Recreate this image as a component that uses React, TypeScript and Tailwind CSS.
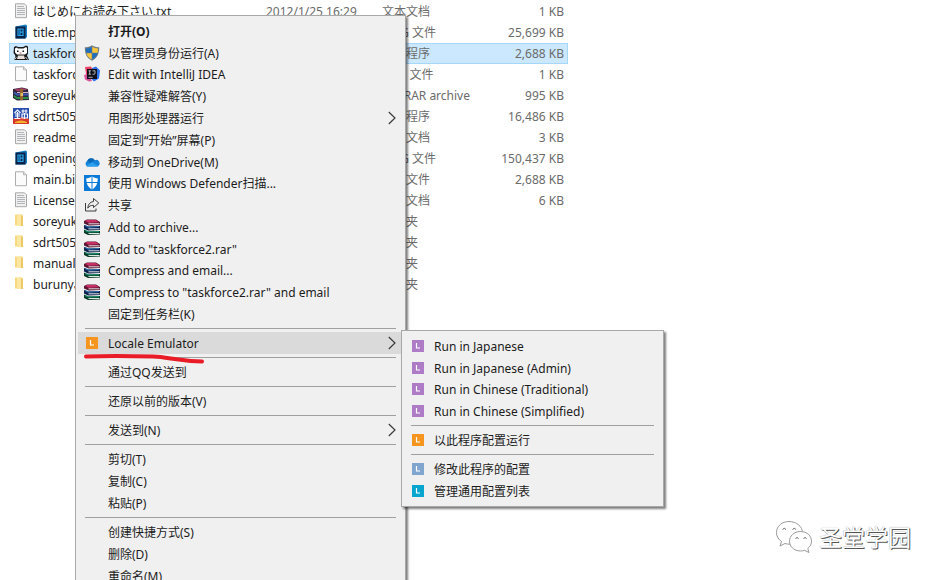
import type { ReactNode } from "react";

function TextFileIcon() {
  return (
    <svg className="block" width="16" height="16" viewBox="0 0 16 16" aria-hidden="true">
      <path d="M2.500 .8h9l2 2v11.900h-11z" fill="#f0f0f0" stroke="#a8a8a8" />
      <path d="M4 3.500h7M4 5.500h8M4 7.500h8M4 9.500h8M4 11.500h8" stroke="#b3b6b8" />
    </svg>
  );
}

function BlankFileIcon() {
  return (
    <svg className="block" width="16" height="16" viewBox="0 0 16 16" aria-hidden="true">
      <path d="M2.500 .8h8l3 3v10.900h-11z" fill="#fbfbfb" stroke="#adadad" />
      <path d="M10.500 .8v3h3" fill="none" stroke="#b5b5b5" />
    </svg>
  );
}

function VideoIcon() {
  return (
    <svg className="block" width="16" height="16" viewBox="0 0 16 16" aria-hidden="true">
      <path d="M2.500 2.500 12.500.500l1.500 1v11.500l-1.500 1.500h-10z" fill="#1b7fc6" />
      <path d="M2.500 2.500h10v12h-10z" fill="#0a2347" />
      <path d="M5 5h5v6.500H5zM7 5v6.500M7 8.200h3" fill="none" stroke="#2aa6ec" strokeWidth="1.200" />
    </svg>
  );
}

function CatIcon() {
  return (
    <svg className="block" width="16" height="16" viewBox="0 0 16 16" aria-hidden="true">
      <path d="M1 2 3 1l2 1h5l3-1.500 2 1v7l-1 2 2 4.500H1l1.500-3L2 10 .5 8z" fill="#1b1b1b" />
      <path d="M2 3.500 3.500 2.500 5 3.500h5.500L13 2l1 1v5l-2 1.500H4L2 7.500z" fill="#fff" />
      <path d="M5 10.500h6l1 3.500H4z" fill="#e9dfda" />
      <path d="M4 5.500h1.500V7H4zM9.500 5.500H11V7H9.500z" fill="#111" />
      <path d="M6.500 7.500h2v1h-2z" fill="#c96868" />
      <path d="M1.500 14.500l2-2M14.500 14.500l-2-2.500" stroke="#cfcfcf" />
    </svg>
  );
}

function WinRarIcon() {
  return (
    <svg className="block" width="16" height="16" viewBox="0 0 16 16" aria-hidden="true">
      <path d="M0 2 3 .500h9l4 2.500v3L4.500 6.500 0 4.500z" fill="#5d1735" />
      <path d="M1 1.800 3.200 1h8.500L15 3.200 4.500 3.800z" fill="#c92f64" />
      <path d="M4.500 4.800h11" stroke="#ecdfe1" />
      <path d="M0 6l4 1.500 12-.5v4l-12 .5-4-2z" fill="#10204c" />
      <path d="M1 6.500l3.500 1.700L15 7.500" fill="none" stroke="#2a6fae" strokeWidth="1.200" />
      <path d="M4.500 9.800h11" stroke="#dfe5ee" />
      <path d="M0 10.500l4 2 12-.5v3.500L4 16l-4-2z" fill="#0c3a28" />
      <path d="M1 11.500l3.500 1.500 10.500-.4" fill="none" stroke="#16906a" strokeWidth="1.200" />
      <path d="M4.500 14.500h11" stroke="#dbe8e0" />
    </svg>
  );
}

function RarFileIcon() {
  return (
    <svg className="block" width="16" height="14" viewBox="0 0 16 14" aria-hidden="true">
      <path d="M0 2l9-1.500L15 2l1 11-12 .500L0 11z" fill="#30273a" />
      <path d="M1 2.500 9 1l6 1.500-10 2z" fill="#a13a68" />
      <path d="M4 5.500h11.500" stroke="#d8b6c6" />
      <path d="M1 5.500l3 2h11.500" fill="none" stroke="#3c5cb8" strokeWidth="2" />
      <path d="M1 9l3 2h11.500" fill="none" stroke="#269047" strokeWidth="2" />
      <path d="M7 2h3v11H7z" fill="#93652d" />
      <path d="M7.500 6h2.500v3H7.500z" fill="#e0bd63" />
    </svg>
  );
}

function GameIcon() {
  return (
    <svg className="block" width="16" height="16" viewBox="0 0 16 16" aria-hidden="true">
      <path d="M0 0h16v16H0z" fill="#2a4eae" />
      <path d="M0 11c5-2 11-2 16 0v5H0z" fill="#d9392b" />
      <path d="M2 14c4-2 8-2 12 0v1H2z" fill="#f0b62e" />
      <path d="M1.500 5 4.500 2l3 3M2 6h5M4.500 4v6M2 8h5M1.500 10.500h6M8.500 3h6M10 1.500V5M13 1.500V5M9 6h5.500v4H9zM11.500 5v6" fill="none" stroke="#f7f9ff" strokeWidth="1.200" />
    </svg>
  );
}

function FolderIcon() {
  return (
    <svg className="block" width="16" height="16" viewBox="0 0 16 16" aria-hidden="true">
      <path d="M2 1.500h7v11H2z" fill="#f7d984" />
      <path d="M4 1.500h5.500v9.500l1 2H4z" fill="#fbe6a2" />
      <path d="M8 2.500h2v10.500H8z" fill="#eec766" />
    </svg>
  );
}

function ShieldIcon() {
  return (
    <svg className="block" width="16" height="16" viewBox="0 0 16 16" aria-hidden="true">
      <path d="M8 .3C6 1.800 3.500 2.300.800 2.300c0 6 1.500 10.500 7.200 13.500 5.700-3 7.200-7.500 7.200-13.500C12.500 2.300 10 1.800 8 .3z" fill="#6d7a83" />
      <path d="M7.700 1.800C6 2.900 4 3.300 2 3.400c0 1.600.1 3 .4 4.300h5.300z" fill="#1f6fbd" />
      <path d="M8.300 1.800C10 2.900 12 3.300 14 3.400c0 1.600-.1 3-.4 4.300H8.300z" fill="#f8c63c" />
      <path d="M2.500 8.200h5.200v6.200C4.700 12.800 3.200 11 2.500 8.200z" fill="#f8c63c" />
      <path d="M13.500 8.200H8.300v6.200c3-1.600 4.500-3.400 5.200-6.200z" fill="#1f6fbd" />
    </svg>
  );
}

function IdeaIcon() {
  return (
    <svg className="block" width="16" height="16" viewBox="0 0 16 16" aria-hidden="true">
      <path d="M1 1l6-.5 3 6-5 8-4-2 1-5z" fill="#ee3f66" />
      <path d="M8 2l4-1.500 4 4-1 8-5 3-3-3z" fill="#2f72ee" />
      <path d="M0 9l4-1 4 7-3 .5-4-2z" fill="#d9559c" />
      <path d="M3 3h10v10H3z" fill="#11101a" />
      <path d="M4.500 4.800h2.500M5.700 4.800v3.400M4.500 8.200h2.500M8.500 4.800h2.500v2.500q0 1-1.200 1H8.500M4.500 11.300h4" fill="none" stroke="#d8d8dc" strokeWidth=".8" />
    </svg>
  );
}

function CloudIcon() {
  return (
    <svg className="block" width="16" height="16" viewBox="0 0 16 16" aria-hidden="true">
      <path d="M3.500 12.500A3 3 0 0 1 3.200 7a4.200 4.200 0 0 1 7.600-.8 3.300 3.300 0 0 1 2.700 6.300z" fill="#1683d8" />
      <path d="M3.200 7a4.200 4.200 0 0 1 7.600-.8L6 9z" fill="#0d68b5" />
      <path d="M2 12l6-3.800 6.500 3.800q-.5.500-1.300.5H3.500z" fill="#2ba0ee" />
    </svg>
  );
}

function DefenderIcon() {
  return (
    <svg className="block" width="16" height="16" viewBox="0 0 16 16" aria-hidden="true">
      <path d="M0 0h16v16H0z" fill="#0b79d5" />
      <path d="M8 1.500C6.200 2.800 4.200 3.200 2.300 3.300c0 5 1 8.500 5.700 11.200 4.700-2.700 5.700-6.200 5.700-11.200C11.800 3.200 9.800 2.800 8 1.500z" fill="#fff" />
      <path d="M8 1.500v13M2 7.500h12" stroke="#0b79d5" />
    </svg>
  );
}

function ShareIcon() {
  return (
    <svg className="block" width="16" height="16" viewBox="0 0 16 16" aria-hidden="true">
      <path d="M1.500 6v8h10.500V11.500" fill="none" stroke="#3c3c3c" />
      <path d="M9.500 1.500 14.800 6 9.500 10.500V8.300C6.800 8.300 5 9 3.800 11.200c.2-3.700 2-6.200 5.700-6.700z" fill="none" stroke="#3c3c3c" strokeLinejoin="round" />
    </svg>
  );
}

function Chevron() {
  return (
    <svg className="block" width="8" height="14" viewBox="0 0 8 14" aria-hidden="true">
      <path d="M.8 1 7 7 .8 13" fill="none" stroke="#3a3a3a" strokeWidth="1.200" />
    </svg>
  );
}

function LocaleIcon({ tone }: { tone: string }) {
  return (
    <svg className={`block ${tone}`} width="12" height="12" viewBox="0 0 12 12" aria-hidden="true">
      <path d="M0 0h12v12H0z" fill="currentColor" />
      <path d="M4.500 3v5h3.500" fill="none" stroke="#fff" strokeWidth="1.200" />
    </svg>
  );
}

type FileRow = { icon: ReactNode; name: string; date?: string; type: string; size?: string; selected?: boolean };

const files: FileRow[] = [
  { icon: <TextFileIcon />, name: "はじめにお読み下さい.txt", date: "2012/1/25 16:29", type: "文本文档", size: "1 KB" },
  { icon: <VideoIcon />, name: "title.mpg", type: "MPG 文件", size: "25,699 KB" },
  { icon: <CatIcon />, name: "taskforce2.exe", type: "应用程序", size: "2,688 KB", selected: true },
  { icon: <BlankFileIcon />, name: "taskforce2.dll", type: "DLL  文件", size: "1 KB" },
  { icon: <RarFileIcon />, name: "soreyuke.rar", type: "WinRAR archive", size: "995 KB" },
  { icon: <GameIcon />, name: "sdrt505.exe", type: "应用程序", size: "16,486 KB" },
  { icon: <TextFileIcon />, name: "readme.txt", type: "文本文档", size: "3 KB" },
  { icon: <VideoIcon />, name: "opening.mpg", type: "MPG 文件", size: "150,437 KB" },
  { icon: <BlankFileIcon />, name: "main.bin", type: "BIN 文件", size: "2,688 KB" },
  { icon: <TextFileIcon />, name: "License.txt", type: "文本文档", size: "6 KB" },
  { icon: <FolderIcon />, name: "soreyuke", type: "文件夹" },
  { icon: <FolderIcon />, name: "sdrt505", type: "文件夹" },
  { icon: <FolderIcon />, name: "manual", type: "文件夹" },
  { icon: <FolderIcon />, name: "burunya", type: "文件夹" },
];

function FileList() {
  return (
    <table className="ml-[9px] mt-px w-[559px] table-fixed border-collapse text-[#6b6b6b]">
      <colgroup>
        <col className="w-[257px]" />
        <col className="w-[116px]" />
        <col className="w-[106px]" />
        <col />
      </colgroup>
      <tbody>
        {files.map((f, i) => (
          <tr key={i} className={f.selected ? "h-[21px] bg-[#cce8ff] outline -outline-offset-1 outline-[#a5d6fb]" : "h-[21px]"}>
            <td className="p-0 text-[#222]">
              <div className="flex items-start gap-1 whitespace-nowrap pl-1 leading-5">
                <span className="w-4 shrink-0 pt-0.5">{f.icon}</span>
                <span className="pt-px">{f.name}</span>
              </div>
            </td>
            <td className="p-0 pt-px leading-5">{f.date}</td>
            <td className="whitespace-pre p-0 pt-px leading-5">{f.type}</td>
            <td className="p-0 pr-1 pt-px text-right leading-5">{f.size}</td>
          </tr>
        ))}
      </tbody>
    </table>
  );
}

type ItemProps = { icon?: ReactNode; label: string; bold?: boolean; arrow?: boolean; active?: boolean };

function Item({ icon, label, bold, arrow, active }: ItemProps) {
  return (
    <button
      type="button"
      role="menuitem"
      aria-haspopup={arrow ? "menu" : undefined}
      className={`flex min-h-0 w-full flex-1 items-center pl-1.5 pr-[7px] text-left ${bold ? "font-bold" : ""} ${active ? "bg-[#dadada]" : ""}`}
    >
      <span className="flex w-4 shrink-0 justify-center">{icon}</span>
      <span className="ml-2 flex-1 whitespace-nowrap pt-0.5 leading-5">{label}</span>
      {arrow && <Chevron />}
    </button>
  );
}

function Divider() {
  return <div role="separator" className="mx-[7px] my-[3px] h-px bg-[#a0a0a0]" />;
}

function ContextMenu() {
  return (
    <div role="menu" className="absolute left-[75px] top-[15px] w-[331px] border border-[#a8a8a8] bg-[#f0f0f0] px-[2px] py-1 shadow-[2px_2px_2px_rgba(0,0,0,0.5)]">
      <div className="flex h-[305px] flex-col">
        <Item label="打开(O)" bold />
        <Item icon={<ShieldIcon />} label="以管理员身份运行(A)" />
        <Item icon={<IdeaIcon />} label="Edit with IntelliJ IDEA" />
        <Item label="兼容性疑难解答(Y)" />
        <Item label="用图形处理器运行" arrow />
        <Item label="固定到“开始”屏幕(P)" />
        <Item icon={<CloudIcon />} label="移动到 OneDrive(M)" />
        <Item icon={<DefenderIcon />} label="使用 Windows Defender扫描..." />
        <Item icon={<ShareIcon />} label="共享" />
        <Item icon={<WinRarIcon />} label="Add to archive..." />
        <Item icon={<WinRarIcon />} label={'Add to "taskforce2.rar"'} />
        <Item icon={<WinRarIcon />} label="Compress and email..." />
        <Item icon={<WinRarIcon />} label={'Compress to "taskforce2.rar" and email'} />
        <Item label="固定到任务栏(K)" />
      </div>
      <Divider />
      <div className="relative flex h-[22px]">
        <Item icon={<LocaleIcon tone="text-[#f5951f]" />} label="Locale Emulator" arrow active />
        <svg className="pointer-events-none absolute left-[5px] top-5 z-10" width="122" height="12" viewBox="0 0 122 12" aria-hidden="true">
          <path d="M3 4.500C30 3.500 50 4 70 4.500 85 5 93 8.500 119 9.500" fill="none" stroke="#e81b26" strokeWidth="4" strokeLinecap="round" />
        </svg>
        <SubMenu />
      </div>
      <Divider />
      <div className="flex h-[22px]"><Item label="通过QQ发送到" /></div>
      <Divider />
      <div className="flex h-[22px]"><Item label="还原以前的版本(V)" /></div>
      <Divider />
      <div className="flex h-[22px]"><Item label="发送到(N)" arrow /></div>
      <Divider />
      <div className="flex h-[66px] flex-col">
        <Item label="剪切(T)" />
        <Item label="复制(C)" />
        <Item label="粘贴(P)" />
      </div>
      <Divider />
      <div className="flex h-[66px] flex-col">
        <Item label="创建快捷方式(S)" />
        <Item label="删除(D)" />
        <Item label="重命名(M)" />
      </div>
    </div>
  );
}

function SubMenu() {
  const purple = <LocaleIcon tone="text-[#ae7bc6]" />;
  return (
    <div role="menu" className="absolute -top-[2px] left-full -ml-[2px] w-[263px] border border-[#a8a8a8] bg-[#f0f0f0] px-[2px] py-1 shadow-[2px_2px_2px_rgba(0,0,0,0.5)]">
      <div className="flex h-[87px] flex-col">
        <Item icon={purple} label="Run in Japanese" />
        <Item icon={purple} label="Run in Japanese (Admin)" />
        <Item icon={purple} label="Run in Chinese (Traditional)" />
        <Item icon={purple} label="Run in Chinese (Simplified)" />
      </div>
      <Divider />
      <div className="flex h-[22px]"><Item icon={<LocaleIcon tone="text-[#f5951f]" />} label="以此程序配置运行" /></div>
      <Divider />
      <div className="flex h-11 flex-col">
        <Item icon={<LocaleIcon tone="text-[#80a6cf]" />} label="修改此程序的配置" />
        <Item icon={<LocaleIcon tone="text-[#08a5cf]" />} label="管理通用配置列表" />
      </div>
    </div>
  );
}

function Watermark() {
  return (
    <div className="absolute bottom-[26px] right-[31px] flex items-center gap-[6px]">
      <svg width="38" height="34" viewBox="0 0 38 34" fill="#fff" stroke="#9a9a9a" strokeWidth="1" aria-hidden="true">
        <path d="M14 1.500C7 1.500 1.500 6.200 1.500 12.500c0 4 2 7 5 9L5 26l5-2.500q2 .7 5 .7c7 0 12.500-5 12.500-11.500S21 1.500 14 1.500z" />
        <path d="M25.500 11.500c-6.500 0-11 4.500-11 9.700s4.500 9.800 11 9.800q2 0 4-.7l4.500 2.200-1.200-4c2.500-2 3.700-4.500 3.700-7.300 0-5.200-4.500-9.700-11-9.700z" />
        <path d="M7.500 9.500q1.700-2.500 3.500 0M17.500 9.500q1.700-2.500 3.500 0M20.500 18.500q1.500-2 3 0M28.500 18.500q1.500-2 3 0" fill="none" stroke="#666" />
      </svg>
      <span className="text-[23px] leading-8 text-white [text-shadow:1px_1px_0_#555,0_0_1px_#888]">圣堂学园</span>
    </div>
  );
}

export default function App() {
  return (
    <main className="relative h-screen overflow-hidden bg-white font-['Noto_Sans','Noto_Sans_CJK_SC',sans-serif] text-[12px] text-[#1c1c1c]">
      <FileList />
      <ContextMenu />
      <Watermark />
    </main>
  );
}
